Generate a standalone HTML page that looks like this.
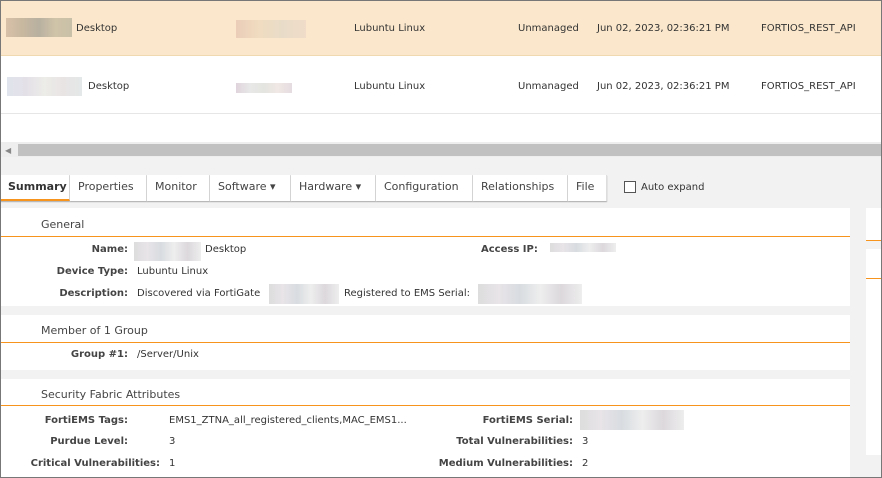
<!DOCTYPE html><html><head><style>
*{margin:0;padding:0;box-sizing:border-box}
body{width:882px;height:478px;overflow:hidden;font-family:"DejaVu Sans","Liberation Sans",sans-serif;font-size:10px;color:#333;background:#f2f2f2;position:relative}
.a{position:absolute;white-space:nowrap}
.blur{position:absolute;background:linear-gradient(90deg,#ddd 0,#e8e4e8 20%,#d8dce0 40%,#eee 60%,#dcd8dc 80%,#eee 100%)}
.frame{position:absolute;left:0;top:0;width:882px;height:478px;border:1px solid #777;pointer-events:none}
.tab{position:absolute;top:175px;height:26px;background:#fff;border-right:1px solid #ddd;font-size:11px;line-height:24px;padding-left:8px;color:#444;box-shadow:0 1px 1px #aaa}
.panel{position:absolute;left:1px;width:849px;background:#fff}
.h{position:absolute;left:40px;font-size:11px;color:#444}
.line{position:absolute;left:0;right:0;height:1px;background:#f7941d}
.l{position:absolute;text-align:right;font-weight:bold;color:#444}
</style></head><body>
<div class="a" style="left:0;top:0;width:882px;height:56px;background:#fbe8cc;border-bottom:1px solid #f0d8b0"></div>
<div class="a" style="left:0;top:56px;width:882px;height:58px;background:#fff;border-bottom:1px solid #e6e6e6"></div>
<div class="a" style="left:0;top:114px;width:882px;height:28px;background:#fff"></div>
<div class="a" style="left:0;top:142px;width:882px;height:15px;background:#eee"></div>
<div class="a" style="left:18px;top:144px;width:864px;height:12px;background:#c1c1c1"></div>
<div class="a" style="left:5px;top:146px;font-size:8px;color:#888">◀</div>
<div class="blur" style="left:6px;top:18px;width:66px;height:19px;background:linear-gradient(90deg,#d8c0a8,#c8b8a0,#b8b0a0,#d0c4a8,#c8c0a8)"></div>
<div class="a" style="left:76px;top:23px">Desktop</div>
<div class="blur" style="left:236px;top:20px;width:70px;height:18px;background:linear-gradient(90deg,#ebcdb8,#f0dcc0,#e8dcc8,#f0dcc8)"></div>
<div class="a" style="left:354px;top:23px">Lubuntu Linux</div>
<div class="a" style="left:518px;top:23px">Unmanaged</div>
<div class="a" style="left:597px;top:23px">Jun 02, 2023, 02:36:21 PM</div>
<div class="a" style="left:761px;top:23px">FORTIOS_REST_API</div>
<div class="blur" style="left:7px;top:77px;width:75px;height:19px;background:linear-gradient(90deg,#e0e4ec,#e4e0e8,#ecece8,#e8e4e4,#e4e8e8)"></div>
<div class="a" style="left:88px;top:81px">Desktop</div>
<div class="blur" style="left:236px;top:83px;width:56px;height:10px;background:linear-gradient(90deg,#e0d4dc,#e8e8e8,#e4e4e0,#f0e8e4,#e4dce0)"></div>
<div class="a" style="left:354px;top:81px">Lubuntu Linux</div>
<div class="a" style="left:518px;top:81px">Unmanaged</div>
<div class="a" style="left:597px;top:81px">Jun 02, 2023, 02:36:21 PM</div>
<div class="a" style="left:761px;top:81px">FORTIOS_REST_API</div>

<div class="tab" style="left:0;width:70px;font-weight:bold;color:#333;border-bottom:2px solid #f7941d">Summary</div>
<div class="tab" style="left:70px;width:77px">Properties</div>
<div class="tab" style="left:147px;width:63px">Monitor</div>
<div class="tab" style="left:210px;width:81px">Software ▾</div>
<div class="tab" style="left:291px;width:85px">Hardware ▾</div>
<div class="tab" style="left:376px;width:97px">Configuration</div>
<div class="tab" style="left:473px;width:95px">Relationships</div>
<div class="tab" style="left:568px;width:39px">File</div>
<div class="a" style="left:624px;top:181px;width:12px;height:12px;border:1px solid #555;background:#fff"></div>
<div class="a" style="left:641px;top:182px">Auto expand</div>

<div class="panel" style="top:208px;height:98px">
<div class="h" style="top:10px">General</div><div class="line" style="top:28px"></div>
<div class="l" style="right:722px;top:36px">Name:</div>
<div class="blur" style="left:133px;top:34px;width:67px;height:19px"></div>
<div class="a" style="left:204px;top:36px">Desktop</div>
<div class="l" style="right:722px;top:58px">Device Type:</div>
<div class="a" style="left:136px;top:58px">Lubuntu Linux</div>
<div class="l" style="right:722px;top:80px">Description:</div>
<div class="a" style="left:136px;top:80px">Discovered via FortiGate</div>
<div class="blur" style="left:268px;top:76px;width:70px;height:20px"></div>
<div class="a" style="left:343px;top:80px">Registered to EMS Serial:</div>
<div class="blur" style="left:477px;top:76px;width:104px;height:20px"></div>
<div class="l" style="left:480px;top:36px">Access IP:</div>
<div class="blur" style="left:549px;top:35px;width:66px;height:9px"></div>
</div>
<div class="panel" style="top:315px;height:55px">
<div class="h" style="top:9px">Member of 1 Group</div><div class="line" style="top:27px"></div>
<div class="l" style="right:722px;top:34px">Group #1:</div>
<div class="a" style="left:136px;top:34px">/Server/Unix</div>
</div>
<div class="panel" style="top:379px;height:99px">
<div class="h" style="top:9px">Security Fabric Attributes</div><div class="line" style="top:26px"></div>
<div class="l" style="right:722px;top:36px">FortiEMS Tags:</div>
<div class="a" style="left:168px;top:36px">EMS1_ZTNA_all_registered_clients,MAC_EMS1...</div>
<div class="l" style="right:722px;top:57px">Purdue Level:</div>
<div class="a" style="left:168px;top:57px">3</div>
<div class="l" style="right:690px;top:79px">Critical Vulnerabilities:</div>
<div class="a" style="left:168px;top:79px">1</div>
<div class="l" style="right:277px;top:36px">FortiEMS Serial:</div>
<div class="blur" style="left:579px;top:31px;width:104px;height:20px"></div>
<div class="l" style="right:277px;top:57px">Total Vulnerabilities:</div>
<div class="a" style="left:581px;top:57px">3</div>
<div class="l" style="right:277px;top:79px">Medium Vulnerabilities:</div>
<div class="a" style="left:581px;top:79px">2</div>
</div>
<div class="a" style="left:866px;top:208px;width:16px;height:33px;background:#fff;border-bottom:1px solid #f7941d"></div>
<div class="a" style="left:866px;top:249px;width:16px;height:206px;background:#fff"></div>
<div class="a" style="left:866px;top:278px;width:16px;height:1px;background:#f7941d"></div>
<div class="frame"></div>
</body></html>
